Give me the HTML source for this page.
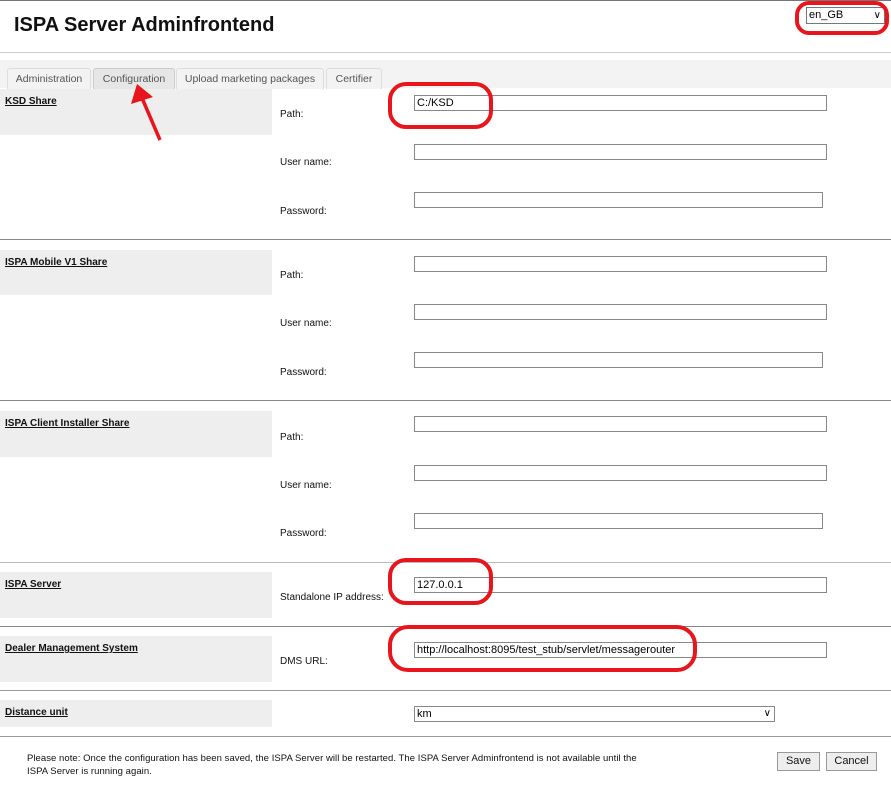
<!DOCTYPE html>
<html><head><style>
body{margin:0;width:891px;height:800px;position:relative;background:#fff;font-family:"Liberation Sans",Arial,sans-serif;overflow:hidden}
.a{position:absolute}
.h{font-size:20px;font-weight:bold;color:#111}
.hr{position:absolute;left:0;width:891px;height:2px;background:#999}
.box{position:absolute;left:0;width:272px;background:#eeeeee}
.st{position:absolute;left:5px;top:7px;font-size:10px;font-weight:bold;text-decoration:underline;color:#111}
.lb{position:absolute;left:280px;font-size:10px;color:#111}
.in{position:absolute;left:414px;height:16px;border:1px solid #888;background:#fff;font-size:11px;line-height:14px;padding-left:2px;box-sizing:border-box}
.tab{position:absolute;top:68px;height:20px;border:1px solid #ddd;border-bottom:none;background:#f3f3f3;font-size:10.5px;color:#555;line-height:20px;text-align:center;border-radius:3px 3px 0 0}
.btn{position:absolute;top:752px;height:17px;border:1px solid #999;background:#eee;font-size:11px;line-height:17px;text-align:center;color:#111}
.red{position:absolute;border:4px solid #e8161c;border-radius:16px}
</style></head><body>
<div class="a" style="left:0;top:0;width:891px;height:1px;background:#777"></div>
<div class="a h" style="left:14px;top:14px">ISPA Server Adminfrontend</div>
<div class="a" style="left:806px;top:7px;width:79px;height:17px;border:1px solid #777;font-size:11px;line-height:15px;padding-left:2px;box-sizing:border-box">en_GB<span style="position:absolute;right:3px;top:0;font-size:10px">&#x2228;</span></div>
<div class="a" style="left:0;top:52px;width:891px;height:1px;background:#ccc"></div>
<div class="a" style="left:0;top:60px;width:891px;height:28px;background:#f3f3f3"></div>
<div class="tab" style="left:7px;width:82px">Administration</div>
<div class="tab" style="left:93px;width:80px;background:#e6e6e6;border-color:#ccc">Configuration</div>
<div class="tab" style="left:176px;width:146px">Upload marketing packages</div>
<div class="tab" style="left:326px;width:54px">Certifier</div>

<div class="box" style="top:89px;height:46px"><div class="st">KSD Share</div></div>
<div class="lb" style="top:109px">Path:</div><div class="lb" style="top:157px">User name:</div><div class="lb" style="top:206px">Password:</div>
<div class="in" style="top:95px;width:413px">C:/KSD</div>
<div class="in" style="top:144px;width:413px"></div>
<div class="in" style="top:192px;width:409px"></div>
<div class="hr" style="top:239px;height:1px;background:#888"></div>

<div class="box" style="top:250px;height:45px"><div class="st">ISPA Mobile V1 Share</div></div>
<div class="lb" style="top:270px">Path:</div><div class="lb" style="top:318px">User name:</div><div class="lb" style="top:367px">Password:</div>
<div class="in" style="top:256px;width:413px"></div>
<div class="in" style="top:304px;width:413px"></div>
<div class="in" style="top:352px;width:409px"></div>
<div class="hr" style="top:400px;height:1px;background:#888"></div>

<div class="box" style="top:411px;height:46px"><div class="st">ISPA Client Installer Share</div></div>
<div class="lb" style="top:432px">Path:</div><div class="lb" style="top:480px">User name:</div><div class="lb" style="top:528px">Password:</div>
<div class="in" style="top:416px;width:413px"></div>
<div class="in" style="top:465px;width:413px"></div>
<div class="in" style="top:513px;width:409px"></div>
<div class="hr" style="top:562px;height:1px;background:#bbb"></div>

<div class="box" style="top:572px;height:46px"><div class="st">ISPA Server</div></div>
<div class="lb" style="top:592px">Standalone IP address:</div>
<div class="in" style="top:577px;width:413px">127.0.0.1</div>
<div class="hr" style="top:626px;height:1px;background:#888"></div>

<div class="box" style="top:636px;height:46px"><div class="st">Dealer Management System</div></div>
<div class="lb" style="top:656px">DMS URL:</div>
<div class="in" style="top:642px;width:413px">http://localhost:8095/test_stub/servlet/messagerouter</div>
<div class="hr" style="top:690px;height:1px;background:#999"></div>

<div class="box" style="top:700px;height:27px"><div class="st">Distance unit</div></div>
<div class="in" style="top:706px;width:361px">km<span style="position:absolute;right:3px;top:0;font-size:10px">&#x2228;</span></div>
<div class="hr" style="top:736px;height:1px;background:#999"></div>

<div class="a" style="left:27px;top:752px;font-size:9.5px;line-height:13px;color:#111;letter-spacing:0.05px">Please note: Once the configuration has been saved, the ISPA Server will be restarted. The ISPA Server Adminfrontend is not available until the<br>ISPA Server is running again.</div>
<div class="btn" style="left:777px;width:41px">Save</div>
<div class="btn" style="left:826px;width:49px">Cancel</div>

<div class="red" style="left:795px;top:1px;width:86px;height:26px;border-radius:14px"></div>
<div class="red" style="left:388px;top:82px;width:97px;height:39px;border-radius:18px"></div>
<div class="red" style="left:388px;top:558px;width:97px;height:39px;border-radius:18px"></div>
<div class="red" style="left:388px;top:625px;width:301px;height:39px;border-radius:20px"></div>
<svg class="a" style="left:0;top:0" width="891" height="800"><line x1="160" y1="140" x2="142" y2="98" stroke="#e8161c" stroke-width="3.5"/><polygon points="137,84 131,104 153,97" fill="#e8161c"/></svg>
</body></html>
